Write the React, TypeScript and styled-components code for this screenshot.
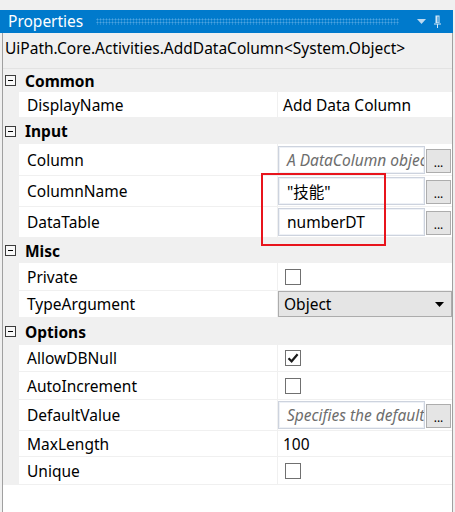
import styled, { createGlobalStyle } from "styled-components";

const GlobalStyle = createGlobalStyle`
  html, body {
    margin: 0;
    padding: 0;
    background: #f0f0f0;
    font-family: "Noto Sans", "Noto Sans CJK SC", sans-serif;
  }
`;

const Panel = styled.div`
  position: relative;
  width: 453px;
  margin-top: 10px;
  font-size: 15.5px;
  color: #000;
`;

const TitleBar = styled.div`
  display: flex;
  align-items: center;
  height: 23px;
  padding: 0 12px 0 8px;
  background: #007acc;
  color: #fff;
`;

const Title = styled.span`
  font-size: 15.5px;
  line-height: 23px;
`;

const Grip = styled.div`
  flex: 1;
  height: 7px;
  margin: 0 10px 0 13px;
  background-image: radial-gradient(circle, #4ea3e0 0.9px, transparent 1.1px);
  background-size: 3px 3px;
`;

const BarIcon = styled.svg`
  display: block;
  margin-left: 8px;
`;

const Body = styled.div`
  margin-left: 2px;
  width: 449px;
  border-left: 1px solid #a0a0a0;
  border-right: 1px solid #a0a0a0;
  height: 479px;
  background: #fff;
`;

const TypeLabel = styled.div`
  height: 35px;
  line-height: 30px;
  padding-left: 2px;
  background: #f0f0f0;
  border-bottom: 1px solid #e3e3e3;
  white-space: nowrap;
`;

const CategoryRow = styled.div<{ $h: number }>`
  display: flex;
  align-items: center;
  height: ${(p) => p.$h}px;
  background: #f0f0f0;
  font-weight: bold;
`;

const Toggle = styled.span`
  display: flex;
  align-items: center;
  justify-content: center;
  box-sizing: border-box;
  width: 11px;
  height: 11px;
  margin: 0 9px 0 2px;
  border: 1px solid #3c3c3c;
  background: #f8f8f8;

  &::after {
    content: "";
    width: 5px;
    height: 1px;
    background: #000;
  }
`;

const PropRow = styled.div<{ $h: number }>`
  display: flex;
  height: ${(p) => p.$h}px;
  background: #f0f0f0;
`;

const Gutter = styled.div`
  width: 16px;
  flex-shrink: 0;
`;

const NameCell = styled.div`
  display: flex;
  align-items: center;
  width: 250px;
  margin-bottom: 1px;
  padding-left: 8px;
  background: #fff;
`;

const ValueCell = styled.div`
  display: flex;
  align-items: center;
  flex: 1;
  min-width: 0;
  margin: 0 0 1px 1px;
  background: #fff;
`;

const PlainValue = styled.span`
  padding-left: 5px;
  white-space: nowrap;
`;

const TextBox = styled.div<{ $placeholder?: boolean }>`
  display: flex;
  align-items: center;
  box-sizing: border-box;
  width: 147px;
  height: 28px;
  padding-left: 8px;
  border: 1px solid #cdd3de;
  box-shadow: inset 0 0 0 1px #eef1f6;
  overflow: hidden;
  white-space: nowrap;
  font-style: ${(p) => (p.$placeholder ? "italic" : "normal")};
  color: ${(p) => (p.$placeholder ? "#6d6d6d" : "#000")};
`;

const DotsButton = styled.div`
  display: flex;
  align-items: flex-end;
  justify-content: center;
  box-sizing: border-box;
  width: 25px;
  height: 24px;
  margin-left: 1px;
  align-self: flex-end;
  margin-bottom: 2px;
  padding-bottom: 3px;
  border: 1px solid #adadad;
  background: #e5e5e5;
  font-size: 12px;
  line-height: 1;
`;

const CheckBox = styled.span`
  display: flex;
  align-items: center;
  justify-content: center;
  box-sizing: border-box;
  width: 16px;
  height: 16px;
  margin-left: 7px;
  border: 1px solid #707070;
  background: #fff;
`;

const Select = styled.div`
  display: flex;
  align-items: center;
  justify-content: space-between;
  box-sizing: border-box;
  width: 100%;
  height: 26px;
  padding: 0 7px 0 5px;
  border: 1px solid #acacac;
  background: #e5e5e5;
`;

const Highlight = styled.div`
  position: absolute;
  left: 261px;
  top: 163px;
  width: 125px;
  height: 73px;
  box-sizing: border-box;
  border: 2px solid #e8141c;
  pointer-events: none;
`;

type Value =
  | { kind: "text"; text: string }
  | { kind: "box"; text: string; placeholder?: boolean }
  | { kind: "check"; checked: boolean }
  | { kind: "select"; text: string };

interface IProp {
  name: string;
  h: number;
  value: Value;
}

interface ICategory {
  title: string;
  h: number;
  props: IProp[];
}

const categories: ICategory[] = [
  {
    title: "Common",
    h: 23,
    props: [{ name: "DisplayName", h: 26, value: { kind: "text", text: "Add Data Column" } }],
  },
  {
    title: "Input",
    h: 26,
    props: [
      { name: "Column", h: 32, value: { kind: "box", text: "A DataColumn object", placeholder: true } },
      { name: "ColumnName", h: 31, value: { kind: "box", text: "\"技能\"" } },
      { name: "DataTable", h: 31, value: { kind: "box", text: "numberDT" } },
    ],
  },
  {
    title: "Misc",
    h: 25,
    props: [
      { name: "Private", h: 28, value: { kind: "check", checked: false } },
      { name: "TypeArgument", h: 27, value: { kind: "select", text: "Object" } },
    ],
  },
  {
    title: "Options",
    h: 27,
    props: [
      { name: "AllowDBNull", h: 27, value: { kind: "check", checked: true } },
      { name: "AutoIncrement", h: 28, value: { kind: "check", checked: false } },
      { name: "DefaultValue", h: 31, value: { kind: "box", text: "Specifies the default value", placeholder: true } },
      { name: "MaxLength", h: 26, value: { kind: "text", text: "100" } },
      { name: "Unique", h: 28, value: { kind: "check", checked: false } },
    ],
  },
];

function renderValue(v: Value) {
  switch (v.kind) {
    case "text":
      return <PlainValue>{v.text}</PlainValue>;
    case "box":
      return (
        <>
          <TextBox $placeholder={v.placeholder}>{v.text}</TextBox>
          <DotsButton>...</DotsButton>
        </>
      );
    case "check":
      return (
        <CheckBox>
          {v.checked && (
            <svg width="12" height="12" viewBox="0 0 12 12">
              <path d="M1.5 6.2 L4.6 9.3 L10.6 2.2" fill="none" stroke="#1a1a1a" strokeWidth="2.2" />
            </svg>
          )}
        </CheckBox>
      );
    case "select":
      return (
        <Select>
          <span>{v.text}</span>
          <svg width="9" height="5" viewBox="0 0 9 5">
            <path d="M0 0 H9 L4.5 5 Z" fill="#000" />
          </svg>
        </Select>
      );
  }
}

function App() {
  return (
    <>
      <GlobalStyle />
      <Panel>
        <TitleBar>
          <Title>Properties</Title>
          <Grip />
          <BarIcon width="9" height="5" viewBox="0 0 9 5">
            <path d="M0 0 H9 L4.5 5 Z" fill="#bcd9f0" />
          </BarIcon>
          <BarIcon width="7" height="13" viewBox="0 0 7 13">
            <path d="M1.5 0.5 H5.5 V8 H1.5 Z M0 8.5 H7 V9.5 H0 Z M3 9.5 H4 V13 H3 Z" fill="#d6e9f7" />
            <path d="M4 1.5 V7.5" stroke="#007acc" strokeWidth="1" />
          </BarIcon>
        </TitleBar>
        <Body>
          <TypeLabel>UiPath.Core.Activities.AddDataColumn&lt;System.Object&gt;</TypeLabel>
          {categories.map((c) => (
            <div key={c.title}>
              <CategoryRow $h={c.h}>
                <Toggle />
                {c.title}
              </CategoryRow>
              {c.props.map((p) => (
                <PropRow key={p.name} $h={p.h}>
                  <Gutter />
                  <NameCell>{p.name}</NameCell>
                  <ValueCell>{renderValue(p.value)}</ValueCell>
                </PropRow>
              ))}
            </div>
          ))}
        </Body>
        <Highlight />
      </Panel>
    </>
  );
}

export default App;
